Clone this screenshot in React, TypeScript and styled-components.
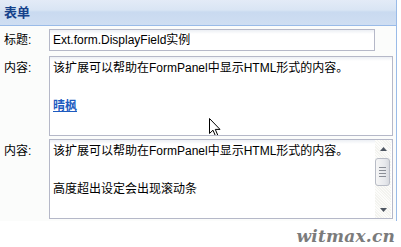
import React from "react";
import styled, { createGlobalStyle } from "styled-components";

const Global = createGlobalStyle`
  html, body { margin: 0; padding: 0; background: #ffffff; }
  body { font-family: "Liberation Sans", "Noto Sans CJK SC", sans-serif; }
`;

const Page = styled.div`
  width: 401px;
  height: 247px;
  display: flex;
  flex-direction: column;
  overflow: hidden;
`;

const Panel = styled.div`
  width: 396px;
  border-right: 1px solid #99bbe8;
  display: flex;
  flex-direction: column;
`;

const Header = styled.div`
  height: 25px;
  border-bottom: 1px solid #99bbe8;
  background: linear-gradient(#e3ebf7 0%, #d9e5f4 40%, #c9daf0 48%, #cfdef2 100%);
  display: flex;
  align-items: center;
  padding-left: 4px;
`;

const Title = styled.span`
  font-size: 13px;
  font-weight: bold;
  color: #15428b;
  line-height: 16px;
`;

const Body = styled.div`
  background: #fbfcfb;
  padding: 3px 3px 2px 4px;
  display: flex;
  flex-direction: column;
`;

const Row = styled.div<{ $gap: number }>`
  display: flex;
  align-items: flex-start;
  margin-bottom: ${(p) => p.$gap}px;
`;

const Label = styled.div<{ $top: number }>`
  width: 45px;
  flex: none;
  font-size: 12px;
  line-height: 19px;
  color: #000;
  padding-top: ${(p) => p.$top}px;
`;

const TextField = styled.div`
  width: 321px;
  height: 20px;
  border: 1px solid #b5b8c8;
  background: linear-gradient(#eceff4 0px, #ffffff 4px);
  font-size: 12px;
  line-height: 20px;
  padding-left: 3px;
  color: #000;
  box-sizing: content-box;
  white-space: nowrap;
`;

const Display = styled.div`
  position: relative;
  width: 342px;
  height: 78px;
  border: 1px solid #b5b8c8;
  background: linear-gradient(#eceff4 0px, #ffffff 4px);
  display: flex;
  overflow: hidden;
`;

const Content = styled.div`
  flex: 1;
  padding: 2px 3px;
  font-size: 12px;
  line-height: 19px;
  color: #000;
  white-space: nowrap;
`;

const Link = styled.a`
  color: #1d5bbf;
  font-weight: bold;
  text-decoration: underline;
`;

const Scrollbar = styled.div`
  width: 16px;
  margin-right: 1px;
  display: flex;
  flex-direction: column;
  background: repeating-linear-gradient(45deg, #f3f3ef 0 1px, #fcfcfa 1px 2px);
`;

const Arrow = styled.div`
  height: 17px;
  display: flex;
  align-items: center;
  justify-content: center;
`;

const Track = styled.div`
  flex: 1;
  padding-top: 1px;
`;

const Thumb = styled.div`
  height: 26px;
  margin: 0 1px 0 0;
  border: 1px solid #b8bcc6;
  border-radius: 3px;
  background: linear-gradient(90deg, #f6f6f6, #e6e8ec 70%, #d8dadf);
  display: flex;
  flex-direction: column;
  align-items: center;
  justify-content: center;
  gap: 2px;
`;

const Grip = styled.div`
  width: 7px;
  height: 1px;
  background: #8a8e96;
`;

const Cursor = styled.svg`
  position: absolute;
  left: 159px;
  top: 61px;
`;

const Footer = styled.div`
  flex: 1;
  display: flex;
  justify-content: flex-end;
  padding: 6px 6px 0 0;
`;

const Watermark = styled.span`
  font-family: "DejaVu Serif", serif;
  font-style: italic;
  font-weight: bold;
  font-size: 17px;
  line-height: 18px;
  letter-spacing: 0.2px;
  color: #7b7b7b;
`;

const UpArrow = () => (
  <svg width="7" height="4" viewBox="0 0 7 4">
    <path d="M0 4 L3.5 0 L7 4 Z" fill="#4d5560" />
  </svg>
);

const DownArrow = () => (
  <svg width="7" height="4" viewBox="0 0 7 4">
    <path d="M0 0 L3.5 4 L7 0 Z" fill="#4d5560" />
  </svg>
);

export default function App() {
  return (
    <Page>
      <Global />
      <Panel>
        <Header>
          <Title>表单</Title>
        </Header>
        <Body>
          <Row $gap={5}>
            <Label $top={2}>标题:</Label>
            <TextField>Ext.form.DisplayField实例</TextField>
          </Row>
          <Row $gap={3}>
            <Label $top={3}>内容:</Label>
            <Display>
              <Content>
                该扩展可以帮助在FormPanel中显示HTML形式的内容。
                <br />
                <br />
                <Link>晴枫</Link>
              </Content>
              <Cursor width="13" height="20" viewBox="0 0 13 20">
                <path
                  d="M0.5 0.5 L0.5 15.5 L4 12.2 L6.6 18.3 L8.8 17.3 L6.3 11.4 L11 11.4 Z"
                  fill="#ffffff"
                  stroke="#000000"
                  strokeWidth="1"
                  strokeLinejoin="miter"
                />
              </Cursor>
            </Display>
          </Row>
          <Row $gap={0}>
            <Label $top={3}>内容:</Label>
            <Display>
              <Content>
                该扩展可以帮助在FormPanel中显示HTML形式的内容。
                <br />
                <br />
                高度超出设定会出现滚动条
              </Content>
              <Scrollbar>
                <Arrow>
                  <UpArrow />
                </Arrow>
                <Track>
                  <Thumb>
                    <Grip />
                    <Grip />
                    <Grip />
                    <Grip />
                  </Thumb>
                </Track>
                <Arrow>
                  <DownArrow />
                </Arrow>
              </Scrollbar>
            </Display>
          </Row>
        </Body>
      </Panel>
      <Footer>
        <Watermark>witmax.cn</Watermark>
      </Footer>
    </Page>
  );
}
